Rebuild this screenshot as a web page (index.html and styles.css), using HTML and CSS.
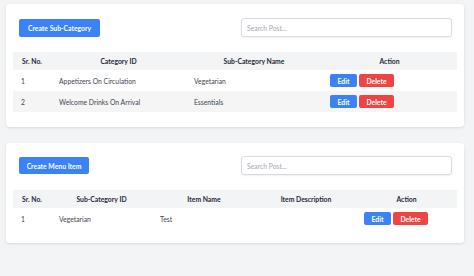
FILE: index.html
```html
<!DOCTYPE html>
<html>
<head>
<meta charset="utf-8">
<link rel="stylesheet" href="styles.css">
</head>
<body>
<div class="page">
  <section class="card">
    <div class="bar">
      <button class="btn btn-create">Create Sub-Category</button>
      <input class="search" type="text" placeholder="Search Post...">
    </div>
    <table class="tbl">
      <colgroup>
        <col class="c38"><col class="c135"><col class="c136"><col class="c135">
      </colgroup>
      <thead>
        <tr><th>Sr. No.</th><th>Category ID</th><th>Sub-Category Name</th><th>Action</th></tr>
      </thead>
      <tbody>
        <tr><td>1</td><td>Appetizers On Circulation</td><td>Vegetarian</td><td><button class="btn btn-edit">Edit</button><button class="btn btn-del">Delete</button></td></tr>
        <tr class="alt"><td>2</td><td>Welcome Drinks On Arrival</td><td>Essentials</td><td><button class="btn btn-edit">Edit</button><button class="btn btn-del">Delete</button></td></tr>
      </tbody>
    </table>
  </section>
  <section class="card card-menu">
    <div class="bar">
      <button class="btn btn-create btn-menu">Create Menu Item</button>
      <input class="search" type="text" placeholder="Search Post...">
    </div>
    <table class="tbl">
      <colgroup>
        <col class="c38"><col class="c101"><col class="c104"><col class="c100"><col class="c101">
      </colgroup>
      <thead>
        <tr><th>Sr. No.</th><th>Sub-Category ID</th><th>Item Name</th><th>Item Description</th><th>Action</th></tr>
      </thead>
      <tbody>
        <tr><td>1</td><td>Vegetarian</td><td>Test</td><td></td><td><button class="btn btn-edit">Edit</button><button class="btn btn-del">Delete</button></td></tr>
      </tbody>
    </table>
  </section>
</div>
</body>
</html>
```
FILE: styles.css
```css
* { box-sizing: border-box; }
html, body { margin: 0; padding: 0; }
body {
  background: #f3f4f6;
  font-family: "Lato", "Open Sans", sans-serif;
  color: #374151;
  width: 474px;
  height: 276px;
  overflow: hidden;
}
.page {
  padding: 4px 10px 0 6px;
  display: flex;
  flex-direction: column;
  gap: 16px;
}
.card {
  background: #ffffff;
  border-radius: 3px;
  box-shadow: 0 1px 3px rgba(0,0,0,0.10), 0 0 1px rgba(0,0,0,0.06);
  padding: 14px 7px 15px 7px;
}
.card-menu { padding-top: 13px; padding-bottom: 14px; }
.bar {
  display: flex;
  justify-content: space-between;
  align-items: center;
  padding: 0 5px 0 6px;
  margin-bottom: 15px;
}
.btn {
  border: none;
  font-family: "Lato", "Open Sans", sans-serif;
  font-weight: 700;
  color: #ffffff;
  cursor: pointer;
  padding: 0;
}
.btn-create {
  background: #3b82f6;
  height: 18px;
  width: 81px;
  font-size: 6.8px;
  border-radius: 2px;
}
.btn-menu { width: 70px; height: 17px; }
.search {
  width: 211px;
  height: 19px;
  border: 1px solid #d8dce2;
  border-radius: 3px;
  box-shadow: 0 1px 2px rgba(0,0,0,0.06);
  padding: 0 5px;
  font-family: "Lato", "Open Sans", sans-serif;
  font-size: 6.8px;
  color: #374151;
  outline: none;
}
.search::placeholder { color: #a3a8b0; }
.tbl {
  width: 444px;
  border-collapse: collapse;
  table-layout: fixed;
  font-size: 6.8px;
}
.c38 { width: 38px; }
.c135 { width: 135px; }
.c136 { width: 136px; }
.c101 { width: 101px; }
.c104 { width: 104px; }
.c100 { width: 100px; }
.tbl th {
  background: #f3f4f6;
  height: 18px;
  font-weight: 700;
  color: #1f2937;
  text-align: center;
  padding: 0 8px;
}
.tbl td {
  height: 21px;
  padding: 0 8px;
  text-align: left;
  color: #3f4650;
  white-space: nowrap;
}
.tbl tr.alt td { background: #f5f5f6; }
.btn-edit, .btn-del {
  height: 13px;
  font-size: 6.8px;
  border-radius: 2px;
  vertical-align: middle;
}
.btn-edit { background: #3b82f6; width: 27px; margin-right: 2px; }
.btn-del { background: #ef4444; width: 35px; }
```
